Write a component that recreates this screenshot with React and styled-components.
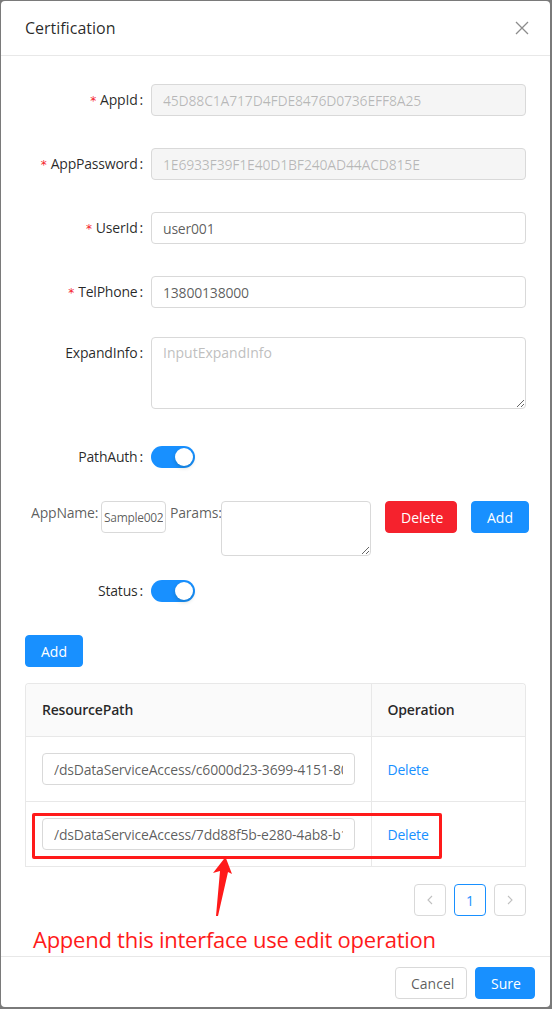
import React from "react";
import styled, { createGlobalStyle } from "styled-components";

const Global = createGlobalStyle`
  html, body {
    margin: 0;
    padding: 0;
    background: #7a7a7a;
  }
  body {
    font-family: "Open Sans", "Noto Sans", sans-serif;
    font-size: 14px;
    letter-spacing: -0.2px;
    color: rgba(0, 0, 0, 0.65);
  }
  * { box-sizing: border-box; }
`;

const Modal = styled.div`
  margin: 1px 0 0 1px;
  width: 549px;
  background: #fff;
  border-radius: 4px;
`;

const Header = styled.div`
  height: 55px;
  padding: 0 21px 0 24px;
  border-bottom: 1px solid #e8e8e8;
  display: flex;
  align-items: center;
  justify-content: space-between;
`;

const Title = styled.div`
  font-size: 16px;
  line-height: 22px;
  font-weight: 500;
  letter-spacing: 0;
  color: rgba(0, 0, 0, 0.85);
`;

const Close = styled.button`
  border: 0;
  background: none;
  padding: 0;
  width: 14px;
  height: 14px;
  display: flex;
  cursor: pointer;
`;

const Body = styled.div`
  padding: 28px 24px 2px;
`;

const FormItem = styled.div`
  display: flex;
  align-items: ${(p) => (p.$top ? "flex-start" : "center")};
  min-height: 32px;
  margin-bottom: ${(p) => p.$mb ?? 32}px;
`;

const Label = styled.label`
  width: 126px;
  height: 32px;
  flex: none;
  text-align: right;
  line-height: 32px;
  color: rgba(0, 0, 0, 0.85);
  white-space: nowrap;
  &::before {
    content: ${(p) => (p.$required ? '"*"' : "none")};
    color: #f5222d;
    margin-right: 4px;
    font-family: "DejaVu Sans", sans-serif;
    font-size: 12px;
    line-height: 1;
  }
  &::after {
    content: ":";
    margin: 0 8px 0 2px;
  }
`;

const Input = styled.input`
  flex: 1;
  min-width: 0;
  height: 32px;
  padding: 4px 11px;
  border: 1px solid #d9d9d9;
  border-radius: 4px;
  font: inherit;
  font-size: 14px;
  letter-spacing: -0.2px;
  color: rgba(0, 0, 0, 0.65);
  background: #fff;
  outline: none;
  &:disabled {
    background: #f5f5f5;
    color: rgba(0, 0, 0, 0.25);
  }
`;

const TextArea = styled.textarea`
  display: block;
  flex: ${(p) => (p.$w ? "none" : "1")};
  width: ${(p) => (p.$w ? `${p.$w}px` : "auto")};
  height: ${(p) => p.$h}px;
  padding: 4px 11px;
  border: 1px solid #d9d9d9;
  border-radius: 4px;
  font: inherit;
  font-size: 14px;
  line-height: 1.5;
  color: rgba(0, 0, 0, 0.65);
  outline: none;
  &::placeholder {
    color: #bfbfbf;
  }
`;

const Switch = styled.span`
  position: relative;
  display: block;
  width: 44px;
  height: 22px;
  border-radius: 100px;
  background: #1890ff;
  &::after {
    content: "";
    position: absolute;
    top: 2px;
    left: 24px;
    width: 18px;
    height: 18px;
    border-radius: 50%;
    background: #fff;
    box-shadow: 0 2px 4px rgba(0, 35, 11, 0.2);
  }
`;

const ParamRow = styled.div`
  display: flex;
  align-items: flex-start;
  padding-left: 6px;
  margin-bottom: 19px;
`;

const InlineLabel = styled.span`
  flex: none;
  width: ${(p) => p.$w}px;
  line-height: 22px;
  padding-top: 1px;
  color: rgba(0, 0, 0, 0.65);
  white-space: nowrap;
`;

const SmallInput = styled.input`
  flex: none;
  width: 65px;
  height: 32px;
  padding: 4px 2px;
  margin-right: 4px;
  border: 1px solid #d9d9d9;
  border-radius: 4px;
  font: inherit;
  font-size: 12px;
  letter-spacing: -0.3px;
  color: rgba(0, 0, 0, 0.65);
  outline: none;
`;

const Button = styled.button`
  flex: none;
  height: 32px;
  width: ${(p) => (p.$w ? `${p.$w}px` : "auto")};
  padding: 0 15px;
  border-radius: 4px;
  font: inherit;
  font-size: 14px;
  cursor: pointer;
  margin-left: ${(p) => p.$ml ?? 0}px;
  border: 1px solid
    ${(p) =>
      p.$kind === "primary" ? "#1890ff" : p.$kind === "danger" ? "#f5222d" : "#d9d9d9"};
  background: ${(p) =>
    p.$kind === "primary" ? "#1890ff" : p.$kind === "danger" ? "#f5222d" : "#fff"};
  color: ${(p) => (p.$kind ? "#fff" : "rgba(0, 0, 0, 0.65)")};
`;

const Annotated = styled.div`
  position: relative;
  margin-top: 16px;
`;

const TableWrap = styled.div`
  border: 1px solid #e8e8e8;
  border-bottom: 0;
  border-radius: 4px 4px 0 0;
`;

const Table = styled.table`
  width: 100%;
  border-collapse: collapse;
  table-layout: fixed;
`;

const Th = styled.th`
  text-align: left;
  padding: 15px 16px;
  line-height: 22px;
  font-weight: 600;
  color: rgba(0, 0, 0, 0.85);
  background: #fafafa;
  border-bottom: 1px solid #e8e8e8;
  &:first-child {
    width: 345px;
    border-right: 1px solid #e8e8e8;
    border-top-left-radius: 4px;
  }
  &:last-child {
    border-top-right-radius: 4px;
  }
`;

const Td = styled.td`
  padding: 16px;
  border-bottom: 1px solid #e8e8e8;
  &:first-child {
    border-right: 1px solid #e8e8e8;
  }
`;

const PathInput = styled(Input)`
  width: 100%;
  display: block;
`;

const Link = styled.a`
  color: #1890ff;
  text-decoration: none;
  cursor: pointer;
`;

const Pager = styled.div`
  display: flex;
  justify-content: flex-end;
  gap: 8px;
  margin-top: 17px;
`;

const PageItem = styled.span`
  width: 32px;
  height: 32px;
  display: flex;
  align-items: center;
  justify-content: center;
  border-radius: 4px;
  border: 1px solid ${(p) => (p.$active ? "#1890ff" : "#d9d9d9")};
  color: ${(p) => (p.$active ? "#1890ff" : "rgba(0, 0, 0, 0.25)")};
`;

const Highlight = styled.div`
  position: absolute;
  left: 7px;
  top: 130px;
  width: 410px;
  height: 46px;
  border: 3px solid #ff1a1a;
  border-radius: 2px;
  pointer-events: none;
`;

const Arrow = styled.svg`
  position: absolute;
  left: 185px;
  top: 172px;
`;

const Note = styled.div`
  margin: 8px 0 0 8px;
  line-height: 30px;
  font-size: 22px;
  letter-spacing: -0.25px;
  color: #ff1a1a;
`;

const Footer = styled.div`
  border-top: 1px solid #e8e8e8;
  padding: 10px 15px 8px;
  display: flex;
  justify-content: flex-end;
  gap: 8px;
`;

const fields = [
  { label: "AppId", value: "45D88C1A717D4FDE8476D0736EFF8A25", disabled: true },
  { label: "AppPassword", value: "1E6933F39F1E40D1BF240AD44ACD815E", disabled: true },
  { label: "UserId", value: "user001" },
  { label: "TelPhone", value: "13800138000", mb: 29 },
];

const paths = [
  "/dsDataServiceAccess/c6000d23-3699-4151-80b2-5a1f0c7e9d41",
  "/dsDataServiceAccess/7dd88f5b-e280-4ab8-b13c-9e2d47a6f015",
];

const Chevron = ({ dir }) => (
  <svg width="10" height="10" viewBox="0 0 10 10">
    <path
      d={dir === "left" ? "M7 1 L3 5 L7 9" : "M3 1 L7 5 L3 9"}
      fill="none"
      stroke="currentColor"
      strokeWidth="1.1"
    />
  </svg>
);

export default function App() {
  return (
    <>
      <Global />
      <Modal>
        <Header>
          <Title>Certification</Title>
          <Close aria-label="Close">
            <svg width="14" height="14" viewBox="0 0 14 14">
              <path d="M1 1 L13 13 M13 1 L1 13" stroke="#8c8c8c" strokeWidth="1.3" />
            </svg>
          </Close>
        </Header>
        <Body>
          {fields.map((f) => (
            <FormItem key={f.label} $mb={f.mb}>
              <Label $required>{f.label}</Label>
              <Input defaultValue={f.value} disabled={f.disabled} />
            </FormItem>
          ))}
          <FormItem $top $mb={32}>
            <Label>ExpandInfo</Label>
            <TextArea $h={72} placeholder="InputExpandInfo" />
          </FormItem>
          <FormItem $mb={28}>
            <Label>PathAuth</Label>
            <Switch />
          </FormItem>
          <ParamRow>
            <InlineLabel $w={70}>AppName:</InlineLabel>
            <SmallInput defaultValue="Sample002" />
            <InlineLabel $w={51}>Params:</InlineLabel>
            <TextArea $w={150} $h={55} />
            <Button $kind="danger" $ml={14} $w={72}>Delete</Button>
            <Button $kind="primary" $ml={14} $w={58}>Add</Button>
          </ParamRow>
          <FormItem $mb={28}>
            <Label>Status</Label>
            <Switch />
          </FormItem>
          <Button $kind="primary" $w={58}>Add</Button>
          <Annotated>
            <TableWrap>
              <Table>
                <thead>
                  <tr>
                    <Th>ResourcePath</Th>
                    <Th>Operation</Th>
                  </tr>
                </thead>
                <tbody>
                  {paths.map((p) => (
                    <tr key={p}>
                      <Td>
                        <PathInput defaultValue={p} />
                      </Td>
                      <Td>
                        <Link>Delete</Link>
                      </Td>
                    </tr>
                  ))}
                </tbody>
              </Table>
            </TableWrap>
            <Pager>
              <PageItem>
                <Chevron dir="left" />
              </PageItem>
              <PageItem $active>1</PageItem>
              <PageItem>
                <Chevron dir="right" />
              </PageItem>
            </Pager>
            <Highlight />
            <Arrow width="26" height="64" viewBox="0 0 26 64">
              <polygon
                points="15.5,2 22,19 18,17 8,61 6,61 10,16 3,18"
                fill="#ff1a1a"
              />
            </Arrow>
          </Annotated>
          <Note>Append this interface use edit operation</Note>
        </Body>
        <Footer>
          <Button $w={72}>Cancel</Button>
          <Button $kind="primary" $w={60}>Sure</Button>
        </Footer>
      </Modal>
    </>
  );
}
